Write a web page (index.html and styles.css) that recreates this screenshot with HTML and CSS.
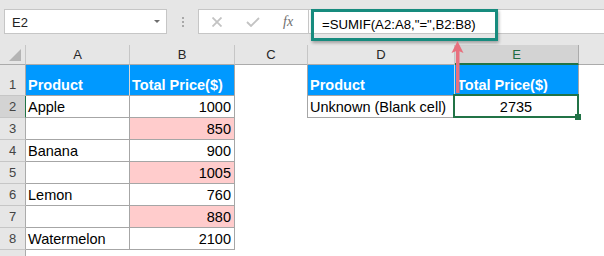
FILE: index.html
```html
<!DOCTYPE html>
<html>
<head>
<meta charset="utf-8">
<link rel="stylesheet" href="styles.css">
</head>
<body>
<div class="app">
  <div class="fbar">
    <div class="namebox"><span class="ref">E2</span><span class="dd"></span></div>
    <div class="grip"><i></i><i></i><i></i></div>
    <div class="btns">
      <svg class="ico icx" viewBox="0 0 10 10"><path d="M0.5 0.5L9.5 9.5M9.5 0.5L0.5 9.5"/></svg>
      <svg class="ico icok" viewBox="0 0 14 10"><path d="M1 5L5 9L13 1"/></svg>
      <span class="fx">fx</span>
    </div>
    <div class="formula">=SUMIF(A2:A8,"=",B2:B8)</div>
    <div class="callout"></div>
  </div>
  <div class="sheet">
    <div class="corner"></div>
    <div class="ch">A</div>
    <div class="ch">B</div>
    <div class="ch">C</div>
    <div class="ch">D</div>
    <div class="ch sel">E</div>
    <div class="ch last"></div>

    <div class="rh">1</div>
    <div class="c t hd lt">Product</div>
    <div class="c t hd">Total Price($)</div>
    <div class="c cb"></div>
    <div class="c t hd lt">Product</div>
    <div class="c t hd">Total Price($)</div>

    <div class="rh sel">2</div>
    <div class="c t">Apple</div>
    <div class="c t r">1000</div>
    <div class="c cb"></div>
    <div class="c t">Unknown (Blank cell)</div>
    <div class="c t m cur">2735</div>

    <div class="rh">3</div>
    <div class="c t"></div>
    <div class="c t r pk">850</div>

    <div class="rh">4</div>
    <div class="c t">Banana</div>
    <div class="c t r">900</div>

    <div class="rh">5</div>
    <div class="c t"></div>
    <div class="c t r pk">1005</div>

    <div class="rh">6</div>
    <div class="c t">Lemon</div>
    <div class="c t r">760</div>

    <div class="rh">7</div>
    <div class="c t"></div>
    <div class="c t r pk">880</div>

    <div class="rh">8</div>
    <div class="c t">Watermelon</div>
    <div class="c t r">2100</div>

    <div class="rh end"></div>
  </div>
  <svg class="arrow" viewBox="0 0 13 54"><rect x="5" y="9" width="3.5" height="44"/><polygon points="6.5,1 12.5,13 6.5,10.5 0.5,13"/></svg>
</div>
</body>
</html>
```
FILE: styles.css
```css
body {
  margin: 0;
  font-family: "Liberation Sans", Arial, sans-serif;
  background: #fff;
}

.app {
  position: relative;
  width: 604px;
  height: 256px;
  overflow: hidden;
  display: flex;
  flex-direction: column;
}

/* formula bar */
.fbar {
  position: relative;
  height: 45px;
  flex: none;
  box-sizing: border-box;
  background: #e6e6e6;
  padding: 9px 0 0 4px;
  display: flex;
  align-items: flex-start;
}

.namebox {
  width: 163px;
  height: 25px;
  box-sizing: border-box;
  border: 1px solid #c6c6c6;
  background: #fff;
  display: flex;
  align-items: center;
  justify-content: space-between;
  padding: 2px 6px 0 7px;
}

.ref {
  font-size: 13px;
  color: #222;
}

.dd {
  width: 0;
  height: 0;
  border-left: 3px solid transparent;
  border-right: 3px solid transparent;
  border-top: 3px solid #6d6d6d;
  margin-bottom: 2px;
}

.grip {
  width: 31px;
  height: 25px;
  display: flex;
  flex-direction: column;
  align-items: center;
  justify-content: center;
  gap: 2px;
}

.grip i {
  width: 2px;
  height: 2px;
  background: #a8a8a8;
}

.btns {
  width: 111px;
  height: 25px;
  box-sizing: border-box;
  border: 1px solid #c6c6c6;
  background: #fff;
  display: flex;
  align-items: center;
  padding-left: 13px;
  gap: 24px;
}

.ico {
  fill: none;
  stroke: #c3c3c3;
  stroke-width: 1.8;
}

.icx {
  width: 10px;
  height: 10px;
}

.icok {
  width: 14px;
  height: 10px;
}

.fx {
  font-family: "Liberation Serif", "Times New Roman", serif;
  font-style: italic;
  font-size: 14px;
  color: #6e6e6e;
  margin-left: -1px;
}

.formula {
  flex: 1;
  height: 25px;
  box-sizing: border-box;
  border: 1px solid #c6c6c6;
  border-left: none;
  border-right: none;
  background: #fff;
  padding: 6px 0 0 13px;
  font-size: 13.2px;
  line-height: 17px;
  color: #000;
  white-space: nowrap;
}

.callout {
  position: absolute;
  left: 311px;
  top: 9px;
  width: 187px;
  height: 32px;
  box-sizing: border-box;
  border: 3px solid #178b7e;
  box-shadow: 1px 2px 3px rgba(0, 0, 0, 0.3);
}

/* sheet grid */
.sheet {
  flex: 1;
  display: grid;
  grid-template-columns: 26px 104px 105px 73px 147px 124px 1fr;
  grid-template-rows: 20px 31px repeat(7, 22px) 1fr;
}

.sheet > div {
  box-sizing: border-box;
}

.corner {
  position: relative;
  background: #e6e6e6;
  border-right: 1px solid #c6c6c6;
  border-bottom: 1px solid #ababab;
}

.corner::after {
  content: "";
  position: absolute;
  right: 4px;
  bottom: 3px;
  width: 0;
  height: 0;
  border-left: 12px solid transparent;
  border-bottom: 12px solid #b4b4b4;
}

.ch {
  background: #e6e6e6;
  border-right: 1px solid #c6c6c6;
  border-bottom: 1px solid #ababab;
  font-size: 13px;
  color: #262626;
  display: flex;
  align-items: center;
  justify-content: center;
}

.ch.sel {
  background: #d3d3d3;
  color: #1e6b41;
  border-bottom: 2px solid #217346;
  border-right-color: #ababab;
}

.ch.last {
  border-right: none;
}

.rh {
  grid-column: 1;
  background: #e6e6e6;
  border-right: 1px solid #ababab;
  border-bottom: 1px solid #c6c6c6;
  font-size: 13px;
  color: #444;
  display: flex;
  justify-content: center;
  align-items: flex-end;
  line-height: 17px;
  padding-bottom: 2px;
}

.rh.sel {
  background: #d3d3d3;
  border-right-color: #217346;
}

.rh.end {
  border-bottom: none;
}

.c {
  font-size: 14.5px;
  line-height: 17px;
  display: flex;
  align-items: flex-end;
  padding: 0 3px 1px 2px;
  white-space: nowrap;
  color: #000;
}

.t {
  border-right: 1px solid #a6a6a6;
  border-bottom: 1px solid #a6a6a6;
}

.hd {
  background: #0099ff;
  color: #fff;
  font-weight: bold;
}

.hd.lt {
  border-right-color: #d8d8d8;
}

.pk {
  background: #ffcccc;
}

.r {
  justify-content: flex-end;
}

.m {
  justify-content: center;
}

.cb {
  border-right: 1px solid #a6a6a6;
}

.cur {
  position: relative;
}

.cur::after {
  content: "";
  position: absolute;
  left: -2px;
  top: -2px;
  right: -1px;
  bottom: -1px;
  border: 2px solid #217346;
}

.cur::before {
  content: "";
  position: absolute;
  right: -3px;
  bottom: -3px;
  width: 6px;
  height: 6px;
  background: #217346;
  z-index: 1;
}

.arrow {
  position: absolute;
  left: 451px;
  top: 40px;
  width: 13px;
  height: 54px;
  fill: #e8707e;
}
```
